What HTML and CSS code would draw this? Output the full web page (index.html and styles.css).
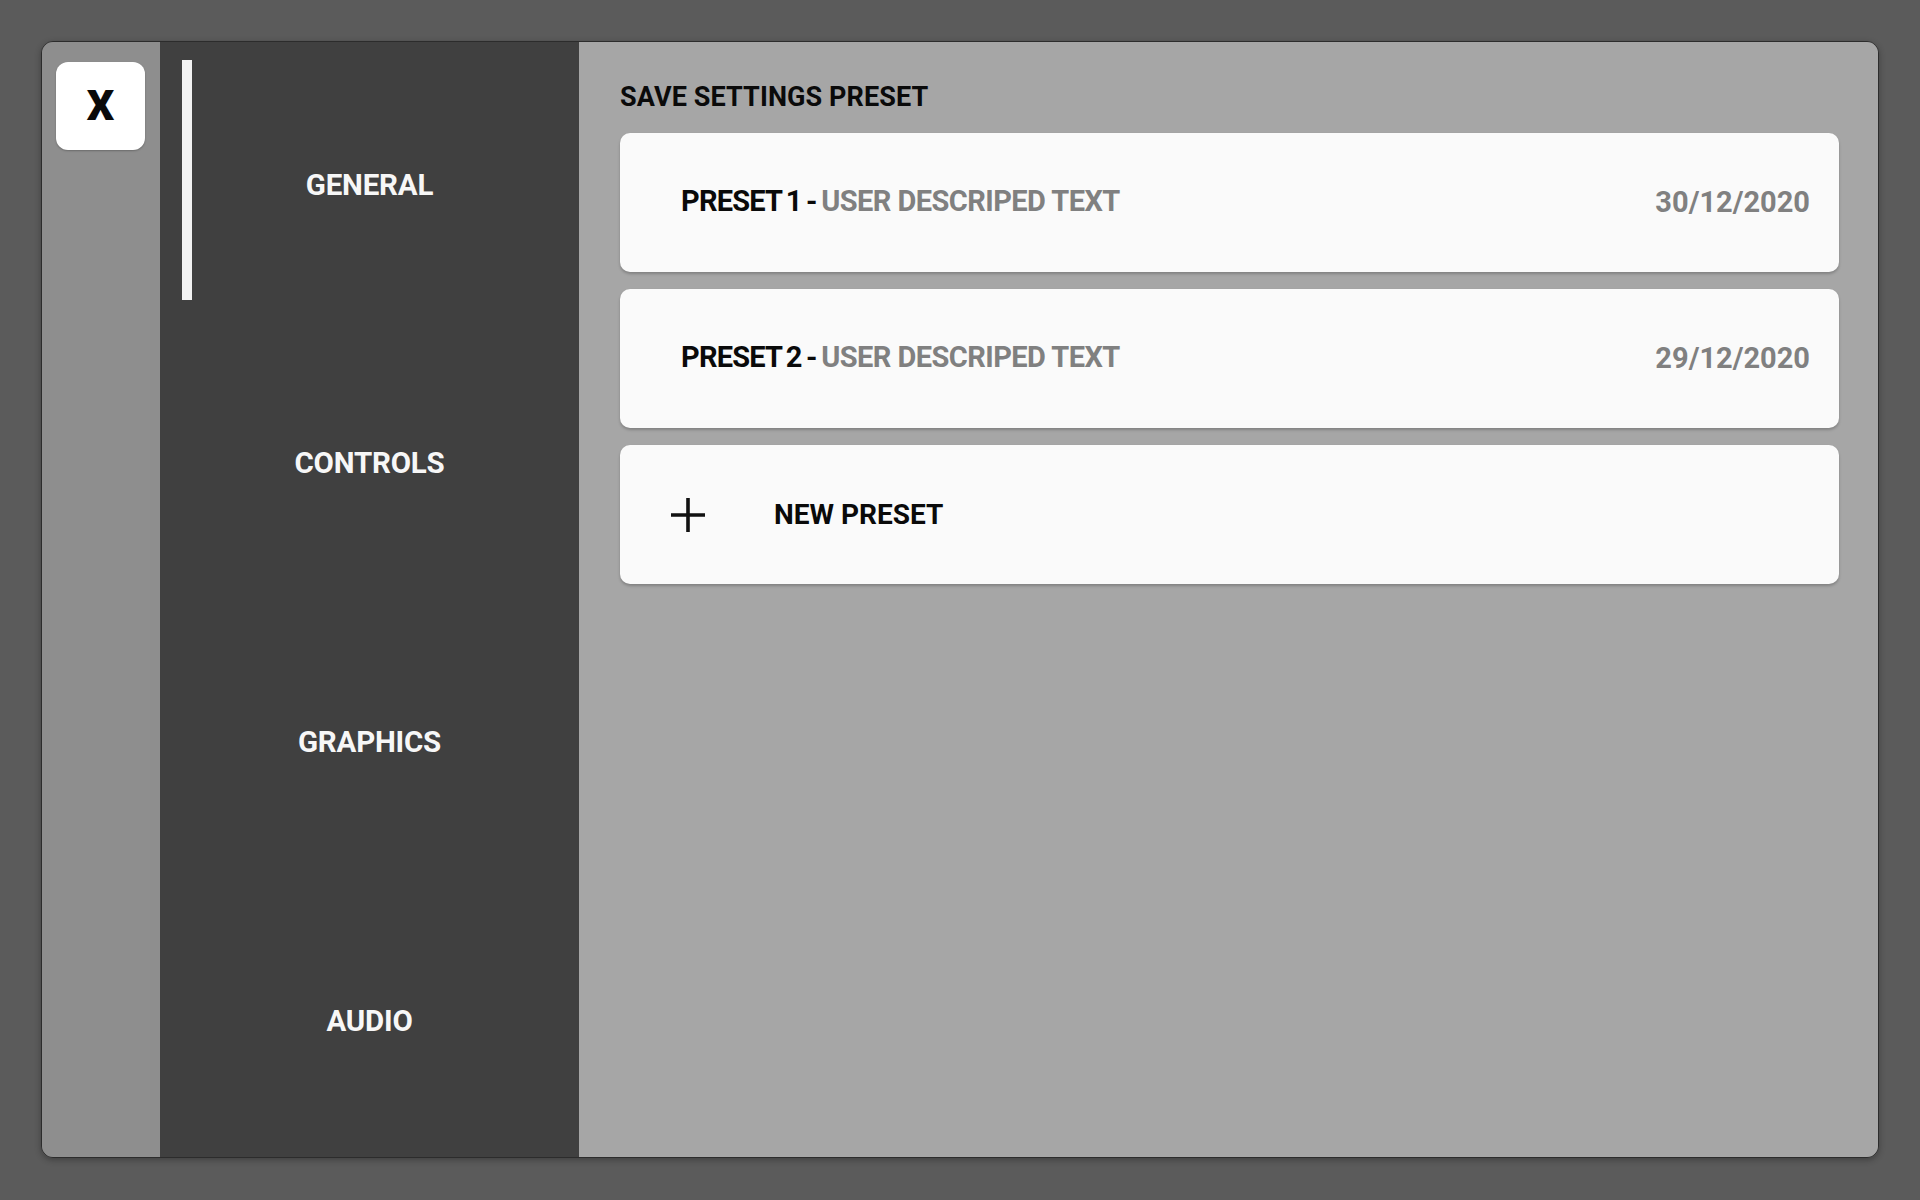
FILE: index.html
```html
<!DOCTYPE html>
<html lang="en">
<head>
<meta charset="utf-8">
<title>Settings</title>
<link rel="stylesheet" href="styles.css">
</head>
<body>
<div class="frame">
  <div class="panel">
    <div class="rail">
      <button class="close">X</button>
    </div>
    <nav class="sidebar">
      <div class="nav-item active">GENERAL</div>
      <div class="nav-item">CONTROLS</div>
      <div class="nav-item">GRAPHICS</div>
      <div class="nav-item">AUDIO</div>
    </nav>
    <main class="content">
      <h1 class="heading">SAVE SETTINGS PRESET</h1>
      <div class="cards">
        <div class="card">
          <div class="card-title"><span class="name">PRESET 1 - </span><span class="desc">USER DESCRIPED TEXT</span></div>
          <div class="date">30/12/2020</div>
        </div>
        <div class="card">
          <div class="card-title"><span class="name">PRESET 2 - </span><span class="desc">USER DESCRIPED TEXT</span></div>
          <div class="date">29/12/2020</div>
        </div>
        <div class="card new">
          <svg class="plus" width="34" height="34" viewBox="0 0 34 34" aria-hidden="true">
            <path d="M17 0V34M0 17H34" stroke="#111" stroke-width="3.6" fill="none"/>
          </svg>
          <div class="new-label">NEW PRESET</div>
        </div>
      </div>
    </main>
  </div>
</div>
</body>
</html>
```
FILE: styles.css
```css
* { box-sizing: border-box; }
html, body { margin: 0; padding: 0; }
body {
  width: 1920px;
  height: 1200px;
  background: #5b5b5b;
  font-family: Roboto, "Liberation Sans", Arial, sans-serif;
  font-weight: 700;
  overflow: hidden;
}
.frame {
  padding: 41px 41px 42px 41px;
  height: 1200px;
}
.panel {
  display: flex;
  height: 1117px;
  border: 1px solid #2c2c2c;
  border-radius: 12px;
  overflow: hidden;
  box-shadow: 0 2px 6px rgba(0,0,0,0.3);
}
.rail {
  width: 118px;
  flex: none;
  background: #8e8e8e;
  padding: 20px 0 0 14px;
}
.close {
  display: flex;
  align-items: center;
  justify-content: center;
  width: 89px;
  height: 88px;
  border: none;
  border-radius: 12px;
  background: #ffffff;
  box-shadow: 0 1px 2px rgba(0,0,0,0.25);
  font-family: Roboto, "Liberation Sans", Arial, sans-serif;
  font-weight: 900;
  font-size: 43px;
  line-height: 1;
  color: #0a0a0a;
  padding: 0 0 2px 0;
}
.sidebar {
  width: 419px;
  flex: none;
  background: #404040;
  display: flex;
  flex-direction: column;
}
.nav-item {
  flex: 1;
  position: relative;
  display: flex;
  align-items: center;
  justify-content: center;
  padding-top: 8px;
  color: #f7f7f7;
  font-size: 29.5px;
  letter-spacing: -0.2px;
  line-height: 1;
}
.nav-item.active::before {
  content: "";
  position: absolute;
  left: 22px;
  top: 18px;
  bottom: 21px;
  width: 10px;
  background: #f2f2f2;
}
.content {
  flex: 1;
  background: #a6a6a6;
  padding: 42px 39px 0 41px;
}
.heading {
  margin: 0 0 22px 0;
  font-size: 27px;
  line-height: 1;
  font-weight: 700;
  letter-spacing: 0.1px;
  color: #0a0a0a;
}
.cards {
  display: flex;
  flex-direction: column;
  gap: 17px;
}
.card {
  height: 139px;
  display: flex;
  align-items: center;
  justify-content: space-between;
  background: #fafafa;
  border-radius: 10px;
  box-shadow: 0 2px 3px rgba(0,0,0,0.22);
  padding: 0 29px 0 61px;
  font-size: 29px;
  line-height: 1;
}
.card-title { padding-bottom: 2px; }
.name {
  color: #0a0a0a;
  letter-spacing: -0.8px;
  word-spacing: -2px;
}
.desc {
  color: #808080;
  letter-spacing: -0.55px;
}
.date { color: #808080; }
.card.new {
  justify-content: flex-start;
  padding-left: 51px;
}
.plus { flex: none; display: block; }
.new-label {
  margin-left: 69px;
  font-size: 28px;
  color: #0a0a0a;
}
```
